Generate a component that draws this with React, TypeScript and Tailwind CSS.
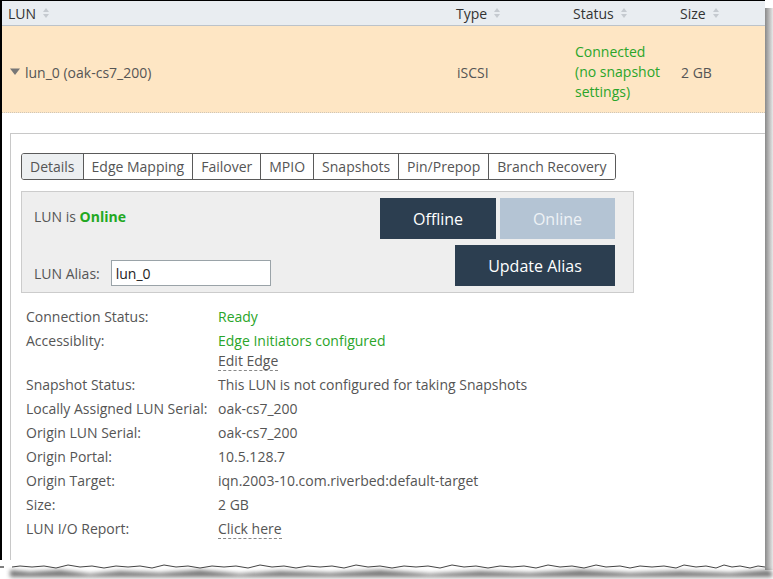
import React from "react";

const SortIcon = () => (
  <svg width="8" height="12" viewBox="0 0 8 12" className="ml-[6px] inline-block">
    <path d="M4 1 L7 5 L1 5 Z" fill="#c5cad0" />
    <path d="M4 11 L7 7 L1 7 Z" fill="#c5cad0" />
  </svg>
);

const tabs = ["Details", "Edge Mapping", "Failover", "MPIO", "Snapshots", "Pin/Prepop", "Branch Recovery"];

const green = "text-[#2aa52a]";

export default function App() {
  const rows: { label: string; value: React.ReactNode }[] = [
    { label: "Connection Status:", value: <span className={green}>Ready</span> },
    {
      label: "Accessiblity:",
      value: (
        <div className="flex flex-col items-start">
          <span className={`${green} leading-[24px]`}>Edge Initiators configured</span>
          <span className="leading-[18px] -mt-[1px] mb-[2px] border-b border-dashed border-[#888]">Edit Edge</span>
        </div>
      ),
    },
    { label: "Snapshot Status:", value: "This LUN is not configured for taking Snapshots" },
    { label: "Locally Assigned LUN Serial:", value: "oak-cs7_200" },
    { label: "Origin LUN Serial:", value: "oak-cs7_200" },
    { label: "Origin Portal:", value: "10.5.128.7" },
    { label: "Origin Target:", value: "iqn.2003-10.com.riverbed:default-target" },
    { label: "Size:", value: "2 GB" },
    {
      label: "LUN I/O Report:",
      value: <span className="leading-[18px] inline-block border-b border-dashed border-[#888]">Click here</span>,
    },
  ];

  return (
    <div
      className="relative w-[773px] h-[579px] bg-white overflow-hidden text-[14px] text-[#555]"
      style={{ fontFamily: '"Open Sans", "Noto Sans", sans-serif' }}
    >
      {/* right shadow */}
      <div className="absolute left-[765px] top-[8px] w-[8px] h-[562px] bg-gradient-to-r from-[#8a8a8a] to-[#e8e8e8]" />
      {/* paper */}
      <div className="w-[765px] h-[566px] border-l-2 border-t border-black flex flex-col">
        {/* header */}
        <div className="h-[25px] bg-[#e9edf1] border-b border-[#bcc3ca] grid grid-cols-[448px_117px_107px_1fr] pl-[6px] items-center text-[#333]">
          <div className="flex items-center">LUN<SortIcon /></div>
          <div className="flex items-center">Type<SortIcon /></div>
          <div className="flex items-center">Status<SortIcon /></div>
          <div className="flex items-center">Size<SortIcon /></div>
        </div>
        {/* row */}
        <div className="h-[87px] pt-[6px] bg-[#fee6c4] border-b border-dotted border-[#cfc6b8] grid grid-cols-[448px_117px_107px_1fr] pl-[6px] items-center">
          <div className="flex items-center">
            <svg width="10" height="8" viewBox="0 0 10 8" className="ml-[2px] mr-[5px]">
              <path d="M0 0.5 L10 0.5 L5 7 Z" fill="#777" />
            </svg>
            lun_0 (oak-cs7_200)
          </div>
          <div className="pl-[1px]">iSCSI</div>
          <div className={`${green} leading-[20px] pl-[2px]`}>
            Connected
            <br />
            (no snapshot
            <br />
            settings)
          </div>
          <div className="pl-[1px]">2 GB</div>
        </div>
        {/* panel */}
        <div className="flex-1 pt-[20px] pl-[8px]">
          <div className="h-full border-l border-t border-[#c8c8c8] pt-[19px] pl-[10px]">
            {/* tabs */}
            <div className="flex h-[27px] w-fit border border-[#5a5a5a] rounded-[3px] overflow-hidden">
              {tabs.map((t, i) => (
                <div
                  key={t}
                  className={`px-[8px] flex items-center ${i > 0 ? "border-l border-[#5a5a5a]" : ""} ${
                    i === 0 ? "bg-[#eceff1]" : "bg-white"
                  }`}
                >
                  {t}
                </div>
              ))}
            </div>
            {/* state box */}
            <div className="mt-[11px] w-[613px] h-[102px] bg-[#eeeeee] border border-[#cccccc] flex justify-between pl-[12px] pr-[18px] pt-[6px]">
              <div className="flex flex-col">
                <div className="mt-[8px]">
                  LUN is <span className="font-bold text-[#22a822]">Online</span>
                </div>
                <div className="mt-[33px] flex items-center">
                  <span>LUN Alias:</span>
                  <input
                    readOnly
                    value="lun_0"
                    className="ml-[11px] w-[160px] h-[26px] border border-[#9aa3a8] bg-white px-[4px] text-[#222] text-[14px] outline-none"
                    style={{ fontFamily: '"Open Sans", "Noto Sans", sans-serif' }}
                  />
                </div>
              </div>
              <div className="flex flex-col items-end gap-[6px]">
                <div className="flex gap-[4px]">
                  <div className="w-[116px] h-[41px] bg-[#2c3e50] text-white text-[16px] flex items-center justify-center">
                    Offline
                  </div>
                  <div className="w-[115px] h-[41px] bg-[#b4c4d4] text-[#eef2f6] text-[16px] flex items-center justify-center">
                    Online
                  </div>
                </div>
                <div className="w-[160px] h-[41px] bg-[#2c3e50] text-white text-[16px] flex items-center justify-center">
                  Update Alias
                </div>
              </div>
            </div>
            {/* details */}
            <div className="mt-[12px] pl-[5px] grid grid-cols-[192px_1fr] leading-[24px]">
              {rows.map((r) => (
                <React.Fragment key={r.label}>
                  <div>{r.label}</div>
                  <div>{r.value}</div>
                </React.Fragment>
              ))}
            </div>
          </div>
        </div>
      </div>
      {/* torn edge */}
      <svg className="absolute left-0 top-[560px]" width="773" height="19" viewBox="0 0 773 19">
        <defs>
          <filter id="blur" x="-5%" y="-50%" width="110%" height="200%">
            <feGaussianBlur stdDeviation="2" />
          </filter>
        </defs>
        <path
          d="M10 10 L30 12 L60 10 L90 14 L120 11 L160 13 L200 10 L240 14 L280 11 L330 13 L380 10 L430 14 L480 11 L530 13 L580 10 L630 13 L680 11 L730 13 L768 10 L772 12 L772 17 L10 17 Z"
          fill="#777"
          filter="url(#blur)"
        />
        <path
          d="M0 0 L765 0 L765 7 L758 6 L750 8 L740 6 L732 7 L724 5 L716 8 L706 6 L696 7 L684 5 L676 8 L664 6 L652 7 L640 6 L630 8 L620 6 L606 7 L596 5 L584 8 L572 6 L560 7 L548 5 L536 8 L524 6 L512 7 L500 6 L488 8 L476 6 L464 7 L452 5 L440 8 L428 6 L416 7 L404 6 L392 8 L380 6 L368 7 L356 5 L344 8 L332 6 L320 7 L308 6 L296 8 L284 6 L272 7 L260 5 L248 8 L236 6 L224 7 L212 6 L200 8 L188 6 L176 7 L164 5 L152 8 L140 6 L128 7 L116 6 L104 8 L92 6 L80 7 L68 5 L56 8 L44 6 L32 7 L20 6 L12 7 L6 6 L0 7 Z"
          fill="#ffffff"
        />
        <path
          d="M765 7 L758 6 L750 8 L740 6 L732 7 L724 5 L716 8 L706 6 L696 7 L684 5 L676 8 L664 6 L652 7 L640 6 L630 8 L620 6 L606 7 L596 5 L584 8 L572 6 L560 7 L548 5 L536 8 L524 6 L512 7 L500 6 L488 8 L476 6 L464 7 L452 5 L440 8 L428 6 L416 7 L404 6 L392 8 L380 6 L368 7 L356 5 L344 8 L332 6 L320 7 L308 6 L296 8 L284 6 L272 7 L260 5 L248 8 L236 6 L224 7 L212 6 L200 8 L188 6 L176 7 L164 5 L152 8 L140 6 L128 7 L116 6 L104 8 L92 6 L80 7 L68 5 L56 8 L44 6 L32 7 L20 6 L12 7"
          fill="none"
          stroke="#444"
          strokeWidth="1"
        />
        <path d="M0 7 L4 7" stroke="#000" strokeWidth="1" />
      </svg>
    </div>
  );
}
